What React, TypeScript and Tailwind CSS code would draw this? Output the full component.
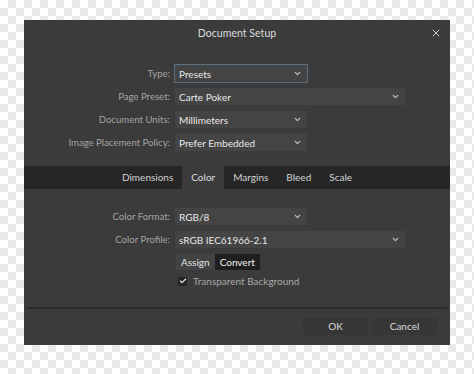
import { X, ChevronDown, Check } from "lucide-react";

const font = { fontFamily: 'Lato, "Noto Sans", sans-serif' };

function Select({ value, wide, focused }: { value: string; wide?: boolean; focused?: boolean }) {
    return (
        <div
            className={`flex h-[17px] items-center justify-between bg-[#444444] pl-[4px] pr-[5px] text-[10px] text-[#e8e8e8] ${
                wide ? "w-[230px]" : "w-[132px]"
            } ${focused ? "ring-1 ring-[#5d6e7c]" : ""}`}
        >
            <span className="leading-none">{value}</span>
            <ChevronDown className="h-[9px] w-[9px] text-[#c8c8c8]" strokeWidth={3} />
        </div>
    );
}

function Row({ label, children }: { label: string; children: React.ReactNode }) {
    return (
        <div className="flex h-[17px] items-center gap-[5px]">
            <span className="w-[146px] text-right text-[9.6px] leading-none text-[#a3a3a3]">{label}</span>
            {children}
        </div>
    );
}

export default function App() {
    const tabs = ["Dimensions", "Color", "Margins", "Bleed", "Scale"];

    return (
        <div
            style={font}
            className="h-[374px] w-[474px] bg-[repeating-conic-gradient(#e9e9e9_0%_25%,#ffffff_0%_50%)] bg-[length:16px_16px] pl-[24px] pt-[20px]"
        >
            <div className="flex h-[325px] w-[426px] flex-col bg-[#3b3b3b]">
                {/* Title */}
                <div className="relative flex h-[27px] items-center justify-center">
                    <span className="text-[10.6px] text-[#dcdcdc]">Document Setup</span>
                    <X className="absolute right-[8px] top-[7px] h-[12px] w-[12px] text-[#d0d0d0]" strokeWidth={2} />
                </div>

                {/* Main fields */}
                <div className="flex flex-col gap-[6px] pt-[18px]">
                    <Row label="Type:">
                        <Select value="Presets" focused />
                    </Row>
                    <Row label="Page Preset:">
                        <Select value="Carte Poker" wide />
                    </Row>
                    <Row label="Document Units:">
                        <Select value="Millimeters" />
                    </Row>
                    <Row label="Image Placement Policy:">
                        <Select value="Prefer Embedded" />
                    </Row>
                </div>

                {/* Tabs */}
                <div className="mt-[15px] flex h-[23px] justify-center bg-[#262626]">
                    {tabs.map((t) => (
                        <div
                            key={t}
                            className={`flex items-center px-[9px] text-[10px] ${
                                t === "Color" ? "bg-[#3b3b3b] text-[#dedede]" : "text-[#d2d2d2]"
                            }`}
                        >
                            {t}
                        </div>
                    ))}
                </div>

                {/* Color tab */}
                <div className="flex flex-col gap-[6px] pt-[19px]">
                    <Row label="Color Format:">
                        <Select value="RGB/8" />
                    </Row>
                    <Row label="Color Profile:">
                        <Select value="sRGB IEC61966-2.1" wide />
                    </Row>
                    <div className="flex pl-[152px]">
                        <div className="flex h-[16px] items-center bg-[#434343] px-[5px] text-[10px] text-[#e2e2e2]">Assign</div>
                        <div className="flex h-[16px] items-center bg-[#1f1f1f] px-[5px] text-[10px] text-[#f0f0f0]">Convert</div>
                    </div>
                    <div className="-mt-px flex h-[12px] items-center gap-[6px] pl-[154px]">
                        <div className="flex h-[9px] w-[9px] items-center justify-center bg-[#262626]">
                            <Check className="h-[8px] w-[8px] text-[#e8e8e8]" strokeWidth={3.5} />
                        </div>
                        <span className="text-[10px] text-[#a8a8a8]">Transparent Background</span>
                    </div>
                </div>

                <div className="flex-1" />

                {/* Footer */}
                <div className="mx-[3px] h-[2px] bg-[#2b2b2b]" />
                <div className="flex justify-end gap-[4px] pb-[10px] pr-[13px] pt-[9px]">
                    <div className="flex h-[17px] w-[65px] items-center justify-center bg-[#363636] text-[10px] text-[#dcdcdc]">OK</div>
                    <div className="flex h-[17px] w-[65px] items-center justify-center bg-[#363636] text-[10px] text-[#dcdcdc]">Cancel</div>
                </div>
            </div>
        </div>
    );
}
